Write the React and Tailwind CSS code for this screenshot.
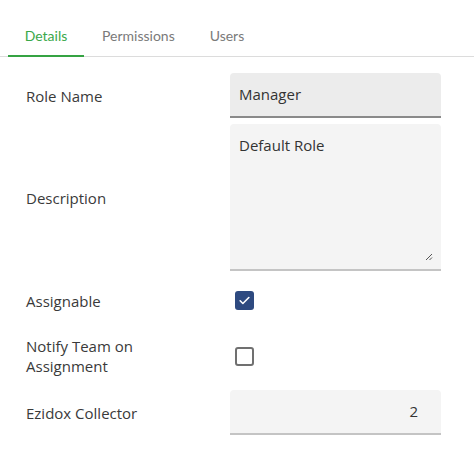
import React from "react";

const Row = ({ label, children, className = "" }) => (
  <div className={`flex items-center ${className}`}>
    <div className="w-[204px] shrink-0 text-[15px] leading-[20px] text-[#3a3a3a]">
      {label}
    </div>
    <div className="w-[211px]">{children}</div>
  </div>
);

const Check = ({ checked }) =>
  checked ? (
    <div className="ml-[5px] flex h-[19px] w-[19px] items-center justify-center rounded-[3px] bg-[#2e4a80]">
      <svg width="13" height="13" viewBox="0 0 24 24" fill="none">
        <path d="M4 12.5l5 5L20 6.5" stroke="white" strokeWidth="3" strokeLinecap="round" strokeLinejoin="round" />
      </svg>
    </div>
  ) : (
    <div className="ml-[5px] h-[19px] w-[19px] rounded-[3px] border-2 border-[#707070] bg-white" />
  );

export default function App() {
  return (
    <div className="h-[451px] w-[474px] bg-white" style={{ fontFamily: '"Open Sans", sans-serif' }}>
      {/* tabs */}
      <div className="flex border-b border-[#dcdcdc] pl-2 pt-[28px]" style={{ fontFamily: "Lato, sans-serif" }}>
        <div className="relative w-[76px] pb-[12px] text-center text-[14px] leading-[16px] text-[#3aa84a]">
          Details
          <div className="absolute bottom-[-1px] left-0 h-[2px] w-full bg-[#35a343]" />
        </div>
        <div className="ml-[18px] pb-[12px] text-[14px] leading-[16px] text-[#7a7a7a]">Permissions</div>
        <div className="ml-[35px] pb-[12px] text-[14px] leading-[16px] text-[#7a7a7a]">Users</div>
      </div>

      <div className="flex flex-col pl-[26px] pt-[16px]">
        <Row label="Role Name">
          <div className="flex h-[45px] items-center rounded-t-[4px] border-b-2 border-[#8a8a8a] bg-[#ececec] px-[9px] text-[15px] text-[#333]">
            Manager
          </div>
        </Row>

        <Row label="Description" className="mt-[6px]">
          <div className="relative h-[147px] rounded-t-[4px] border-b-2 border-[#c4c4c4] bg-[#f4f4f4] px-[9px] pt-[11px] text-[15px] leading-[20px] text-[#333]">
            Default Role
            <svg className="absolute bottom-[8px] right-[8px]" width="8" height="8" viewBox="0 0 8 8">
              <path d="M1 7L7 1M4.5 7L7 4.5" stroke="#555" strokeWidth="1" />
            </svg>
          </div>
        </Row>

        <Row label="Assignable" className="mt-[20px] h-[19px]">
          <Check checked />
        </Row>

        <Row
          label={
            <>
              Notify Team on
              <br />
              Assignment
            </>
          }
          className="mt-[26px]"
        >
          <Check />
        </Row>

        <Row label="Ezidox Collector" className="mt-[14px]">
          <div className="flex h-[45px] items-center justify-end rounded-t-[4px] border-b-2 border-[#c4c4c4] bg-[#f4f4f4] pr-[23px] text-[15px] text-[#333]">
            2
          </div>
        </Row>
      </div>
    </div>
  );
}
